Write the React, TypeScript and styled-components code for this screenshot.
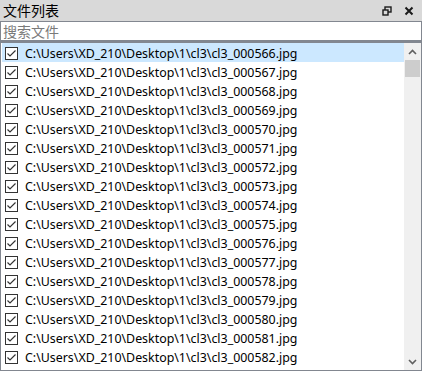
import React from "react";
import styled, { createGlobalStyle } from "styled-components";

const Global = createGlobalStyle`
  html, body { margin: 0; padding: 0; background: #ffffff; }
  body { font-family: "Noto Sans CJK SC", "Noto Sans", sans-serif; }
`;

const Panel = styled.div`
  width: 422px;
  height: 371px;
  display: flex;
  flex-direction: column;
  background: #f0f0f0;
  box-sizing: border-box;
  overflow: hidden;
`;

const TitleBar = styled.div`
  height: 21px;
  flex: none;
  display: flex;
  align-items: center;
  background: #d9d9d9;
  padding: 0 4px 0 3px;
`;

const Title = styled.div`
  flex: 1;
  font-size: 14px;
  color: #000;
  line-height: 21px;
`;

const TitleButton = styled.div`
  width: 18px;
  height: 18px;
  display: flex;
  align-items: center;
  justify-content: center;
  margin-left: 4px;
`;

const Search = styled.div`
  height: 20px;
  flex: none;
  box-sizing: border-box;
  border: 1px solid #828790;
  background: #fff;
  display: flex;
  align-items: center;
  padding-left: 2px;
  font-size: 14px;
  color: #7a7a7a;
`;

const ListFrame = styled.div`
  flex: 1;
  display: flex;
  box-sizing: border-box;
  border: 1px solid #828790;
  border-top: 2px solid #828790;
  background: #fff;
  min-height: 0;
`;

const Rows = styled.div`
  flex: 1;
  padding-left: 1px;
  overflow: hidden;
`;

const Row = styled.div<{ $selected?: boolean }>`
  height: 19px;
  display: flex;
  align-items: center;
  background: ${(p) => (p.$selected ? "#cce8ff" : "transparent")};
  font-family: "Noto Sans", "Noto Sans CJK SC", sans-serif;
  font-size: 12.4px;
  color: #000;
  white-space: nowrap;
  padding-top: 1px;
  box-sizing: border-box;
`;

const Check = styled.span`
  width: 13px;
  height: 13px;
  box-sizing: border-box;
  border: 1px solid #333;
  background: #fff;
  margin: 0 7px 0 3px;
  display: flex;
  align-items: center;
  justify-content: center;
  flex: none;
`;

const Scrollbar = styled.div`
  width: 17px;
  flex: none;
  background: #f0f0f0;
  display: flex;
  flex-direction: column;
  align-items: center;
`;

const ArrowBox = styled.div`
  height: 17px;
  width: 17px;
  display: flex;
  align-items: center;
  justify-content: center;
`;

const Thumb = styled.div`
  width: 15px;
  height: 17px;
  background: #cdcdcd;
`;

const Spacer = styled.div`
  flex: 1;
`;

const CheckMark = () => (
  <svg width="11" height="11" viewBox="0 0 11 11">
    <path d="M1.5 5.5 L4 8 L9.5 2.5" fill="none" stroke="#333" strokeWidth="1.2" />
  </svg>
);

const files = Array.from({ length: 17 }, (_, i) => `C:\\Users\\XD_210\\Desktop\\1\\cl3\\cl3_000${566 + i}.jpg`);

export default function App() {
  return (
    <>
      <Global />
      <Panel>
        <TitleBar>
          <Title>文件列表</Title>
          <TitleButton>
            <svg width="10" height="10" viewBox="0 0 10 10">
              <rect x="3" y="1" width="6" height="5" fill="none" stroke="#1a1a1a" strokeWidth="1.4" />
              <rect x="1" y="4" width="5" height="5" fill="#d9d9d9" stroke="#1a1a1a" strokeWidth="1.4" />
            </svg>
          </TitleButton>
          <TitleButton>
            <svg width="10" height="10" viewBox="0 0 10 10">
              <path d="M1.5 1.5 L8.5 8.5 M8.5 1.5 L1.5 8.5" stroke="#1a1a1a" strokeWidth="2" />
            </svg>
          </TitleButton>
        </TitleBar>
        <Search>搜索文件</Search>
        <ListFrame>
          <Rows>
            {files.map((f, i) => (
              <Row key={f} $selected={i === 0}>
                <Check>
                  <CheckMark />
                </Check>
                {f}
              </Row>
            ))}
          </Rows>
          <Scrollbar>
            <ArrowBox>
              <svg width="9" height="6" viewBox="0 0 9 6">
                <path d="M1 5 L4.5 1.5 L8 5" fill="none" stroke="#606060" strokeWidth="1.6" />
              </svg>
            </ArrowBox>
            <Thumb />
            <Spacer />
            <ArrowBox>
              <svg width="9" height="6" viewBox="0 0 9 6">
                <path d="M1 1 L4.5 4.5 L8 1" fill="none" stroke="#606060" strokeWidth="1.6" />
              </svg>
            </ArrowBox>
          </Scrollbar>
        </ListFrame>
      </Panel>
    </>
  );
}
